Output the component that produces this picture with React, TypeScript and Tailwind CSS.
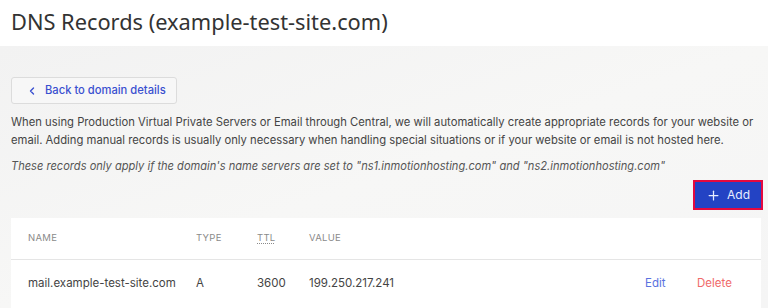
import { ChevronLeft, Plus } from "lucide-react";

const body = { fontFamily: '"Inter", "Noto Sans", sans-serif' };

export default function App() {
  return (
    <div className="w-[768px] h-[308px] overflow-hidden bg-white" style={body}>
      {/* Page title */}
      <div className="h-[46px] bg-white px-[11px] pt-[6px]">
        <h1
          className="text-[21.8px] leading-[32px] font-normal text-[#333] whitespace-nowrap"
          style={{ fontFamily: '"Noto Sans", sans-serif' }}
        >
          DNS Records (example-test-site.com)
        </h1>
      </div>

      {/* Content */}
      <div className="h-[262px] bg-gradient-to-br from-[#f2f2f2] via-[#f7f7f6] to-[#f5f5f5] px-[11px] pt-[31px]">
        <button className="flex items-center gap-[7px] h-[27px] w-[166px] pl-[14px] rounded-[3px] border border-[#dcdcdc] bg-[#f7f7f7] text-[11.2px] text-[#3a50d0] font-medium whitespace-nowrap">
          <ChevronLeft size={12} strokeWidth={2.75} />
          Back to domain details
        </button>

        <p className="mt-[9px] text-[11.25px] leading-[18px] text-[#444] whitespace-nowrap">
          When using Production Virtual Private Servers or Email through Central, we will automatically create appropriate
          records for your website or
          <br />
          email. Adding manual records is usually only necessary when handling special situations or if your website or email
          is not hosted here.
        </p>
        <p className="mt-[8px] text-[11.1px] leading-[18px] italic text-[#555] whitespace-nowrap">
          These records only apply if the domain's name servers are set to "ns1.inmotionhosting.com" and
          "ns2.inmotionhosting.com"
        </p>

        <div className="flex justify-end mt-[5px]">
          <button className="flex items-center gap-[6px] h-[30px] w-[70px] justify-center bg-[#2343c4] border-2 border-[#e4093f] text-[#e8ecff] text-[12px] -mr-[6px]">
            <Plus size={15} strokeWidth={2} />
            Add
          </button>
        </div>

        <div className="mt-[8px] w-[750px] bg-white border-b border-[#e2e2e2]">
          <div className="grid grid-cols-[168px_61px_52px_336px_52px_1fr] h-[42px] items-center px-[17px] border-b border-[#e5e5e5] text-[9.5px] tracking-[0.3px] text-[#8a8a8a]">
            <span>NAME</span>
            <span>TYPE</span>
            <span className="underline decoration-dotted underline-offset-2">TTL</span>
            <span>VALUE</span>
            <span></span>
            <span></span>
          </div>
          <div className="grid grid-cols-[168px_61px_52px_336px_52px_1fr] h-[48px] items-center px-[17px] text-[11.5px] text-[#444]">
            <span>mail.example-test-site.com</span>
            <span>A</span>
            <span>3600</span>
            <span>199.250.217.241</span>
            <span className="text-[#5a72e0]">Edit</span>
            <span className="text-[#f06a6a]">Delete</span>
          </div>
        </div>
      </div>
    </div>
  );
}
